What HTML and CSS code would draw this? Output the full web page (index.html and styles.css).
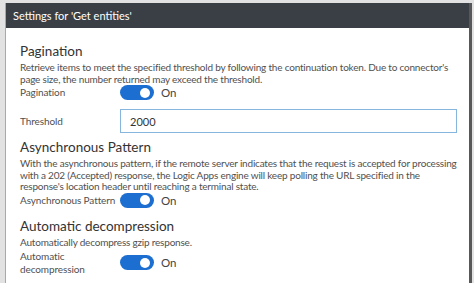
FILE: index.html
```html
<!DOCTYPE html>
<html lang="en">
<head>
    <meta charset="UTF-8">
    <title>Settings for 'Get entities'</title>
    <link rel="stylesheet" href="styles.css">
</head>
<body>
    <div class="panel">
        <div class="panel-header">Settings for 'Get entities'</div>
        <div class="panel-body">
            <div class="section">
                <div class="section-title">Pagination</div>
                <div class="section-desc">Retrieve items to meet the specified threshold by following the continuation token. Due to connector's page&nbsp;size, the number returned may exceed the threshold.</div>
                <div class="row">
                    <div class="row-label">Pagination</div>
                    <div class="toggle"><span class="switch"></span>On</div>
                </div>
                <div class="row row-input">
                    <div class="row-label">Threshold</div>
                    <input type="text" class="field" value="2000">
                </div>
            </div>
            <div class="section">
                <div class="section-title">Asynchronous Pattern</div>
                <div class="section-desc">With the asynchronous pattern, if the remote server indicates that the request is accepted for processing with a 202 (Accepted) response, the Logic Apps engine will keep polling the URL specified in the response's location header until reaching a terminal state.</div>
                <div class="row">
                    <div class="row-label">Asynchronous Pattern</div>
                    <div class="toggle"><span class="switch"></span>On</div>
                </div>
            </div>
            <div class="section">
                <div class="section-title">Automatic decompression</div>
                <div class="section-desc">Automatically decompress gzip response.</div>
                <div class="row">
                    <div class="row-label">Automatic<br>decompression</div>
                    <div class="toggle"><span class="switch"></span>On</div>
                </div>
            </div>
        </div>
    </div>
</body>
</html>
```

FILE: styles.css
```css
* {
    margin: 0;
    padding: 0;
    box-sizing: border-box;
}

body {
    background: #e2e2e2;
    font-family: 'Lato', sans-serif;
    color: #333;
    overflow: hidden;
    height: 283px;
}

.panel {
    margin: 3px 2px 0 5px;
    height: 280px;
    background: #fff;
    border-left: 1px solid #a9a9a9;
    border-right: 3px solid #585858;
}

.panel-header {
    height: 25px;
    background: #3a3f46;
    color: #fff;
    font-size: 11px;
    line-height: 25px;
    padding-left: 7px;
}

.panel-body {
    padding: 14px 4px 0 14px;
}

.section-title {
    font-size: 13.5px;
    line-height: 19px;
    color: #333;
}

.section-desc {
    font-size: 10px;
    letter-spacing: -0.2px;
    line-height: 11.5px;
    margin-top: 1px;
    color: #505050;
}

.row {
    display: flex;
    align-items: center;
    margin-bottom: 9px;
}

.row-label {
    width: 100px;
    font-size: 10px;
    letter-spacing: -0.1px;
    line-height: 13px;
    color: #505050;
    white-space: nowrap;
}

.row-input {
    margin-bottom: 5px;
}

.section:last-child .row {
    margin-top: 1.5px;
    margin-bottom: 0;
}

.toggle {
    display: flex;
    align-items: center;
    font-size: 11.5px;
    color: #444;
}

.switch {
    position: relative;
    width: 34px;
    height: 15px;
    border-radius: 8px;
    background: #1c6fd1;
    margin-right: 7px;
}

.switch::after {
    content: '';
    position: absolute;
    right: 4px;
    top: 2.5px;
    width: 10px;
    height: 10px;
    border-radius: 50%;
    background: #fff;
}

.field {
    width: 337px;
    height: 24px;
    border: 1px solid #86b6de;
    font-family: inherit;
    font-size: 11px;
    color: #333;
    padding-left: 9px;
    outline: none;
}
```
